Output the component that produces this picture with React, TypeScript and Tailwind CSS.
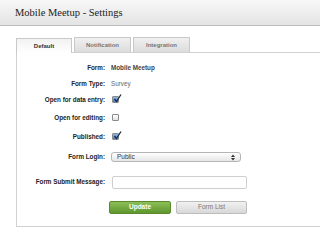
import React from 'react'

const sans = "font-['Liberation_Sans',Arial,sans-serif]"

function Check({ checked }: { checked: boolean }) {
  return (
    <span className="relative inline-block w-[7px] h-[7px] rounded-[1px] border border-[#8a8a8a] bg-gradient-to-b from-[#ffffff] to-[#e2e2e2]">
      {checked && (
        <>
          <span className="absolute inset-0 bg-gradient-to-b from-[#8fb7e6] to-[#3f7fcf]" />
          <svg className="absolute left-[0px] top-[-3px]" width="9" height="9" viewBox="0 0 9 9">
            <path d="M1.5 5 L3.5 7.5 L8 0.5" fill="none" stroke="#1a2a40" strokeWidth="1.3" />
          </svg>
        </>
      )}
    </span>
  )
}

function Row({ label, h, children }: { label: string; h: string; children?: React.ReactNode }) {
  return (
    <div className={`flex items-center ${h}`}>
      <div className="w-[88px] text-right text-[6.3px] font-bold text-[#222] leading-none">{label}</div>
      <div className="ml-[6px] flex items-center text-[6.3px] leading-none">{children}</div>
    </div>
  )
}

export default function App() {
  return (
    <div className={`w-[320px] h-[232px] bg-white overflow-hidden ${sans}`}>
      <div className="h-[26px] border-b border-[#bdbdbd] bg-gradient-to-b from-[#f7f7f7] to-[#e4e4e4] flex items-center pl-[15px]">
        <span className="font-['Liberation_Serif','Times_New_Roman',serif] text-[10.5px] text-[#222]">
          Mobile Meetup - Settings
        </span>
      </div>

      <div className="mt-[11px] ml-[16px]">
        <div className="flex gap-[2px] h-[15px] items-end">
          <div className="w-[56px] h-[15px] -mb-px border border-b-0 border-[#c8c8c8] bg-gradient-to-b from-[#f2f2f2] to-[#ffffff] flex items-center justify-center text-[6px] font-bold text-[#333] relative z-10">
            Default
          </div>
          <div className="w-[57px] h-[15px] border border-b-0 border-[#c8c8c8] bg-gradient-to-b from-[#f0f0f0] to-[#dcdcdc] flex items-center justify-center text-[6px] font-bold text-[#777]">
            Notification
          </div>
          <div className="w-[57px] h-[15px] border border-b-0 border-[#c8c8c8] bg-gradient-to-b from-[#f0f0f0] to-[#dcdcdc] flex items-center justify-center text-[6px] font-bold text-[#777]">
            Integration
          </div>
        </div>

        <div className="border-t border-l border-b border-[#d0d0d0] pt-[7px] pb-[9px]">
          <Row label="Form:" h="h-[16px]">
            <span className="font-bold text-[#444]">Mobile Meetup</span>
          </Row>
          <Row label="Form Type:" h="h-[16px]">
            <span className="text-[#666]">Survey</span>
          </Row>
          <Row label="Open for data entry:" h="h-[17px]">
            <span className="ml-[1px]"><Check checked /></span>
          </Row>
          <Row label="Open for editing:" h="h-[18px]">
            <span className="ml-[1px]"><Check checked={false} /></span>
          </Row>
          <Row label="Published:" h="h-[20px]">
            <span className="ml-[1px]"><Check checked /></span>
          </Row>
          <Row label="Form Login:" h="h-[20px]">
            <div className="w-[130px] h-[10px] rounded-[3px] border border-[#b5b5b5] bg-gradient-to-b from-[#ffffff] to-[#e6e6e6] flex items-center justify-between px-[5px] text-[6.5px] text-[#333]">
              <span>Public</span>
              <svg width="4" height="7" viewBox="0 0 4 7">
                <path d="M0 3 L2 0.5 L4 3 Z M0 4 L2 6.5 L4 4 Z" fill="#333" />
              </svg>
            </div>
          </Row>
          <Row label="Form Submit Message:" h="h-[30px]">
            <div className="ml-[1px] w-[135px] h-[13px] rounded-[2px] border border-[#cfcfcf] bg-white" />
          </Row>
          <div className="flex items-center h-[20px] pl-[92px] gap-[5px]">
            <div className="w-[62px] h-[13px] rounded-[2px] border border-[#5b8a2d] bg-gradient-to-b from-[#8dbf57] to-[#5e962d] flex items-center justify-center text-[6.5px] font-bold text-white">
              Update
            </div>
            <div className="w-[71px] h-[13px] rounded-[2px] border border-[#bdbdbd] bg-gradient-to-b from-[#f1f1f1] to-[#d8d8d8] flex items-center justify-center text-[6.5px] text-[#777]">
              Form List
            </div>
          </div>
        </div>
      </div>
    </div>
  )
}
